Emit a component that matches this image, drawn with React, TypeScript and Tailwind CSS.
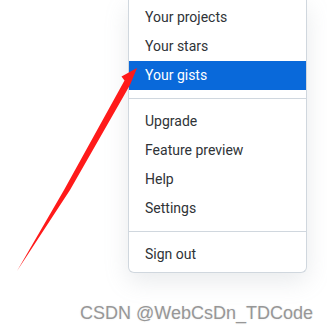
import React from 'react';

const topItems = ['Your projects', 'Your stars', 'Your gists'];
const midItems = ['Upgrade', 'Feature preview', 'Help', 'Settings'];

const Item = ({ label, active }: { label: string; active?: boolean }) => (
    <div
        className={`h-[29px] pl-4 pr-2 flex items-center text-[14px] ${active ? 'bg-[#0969da] text-white' : 'text-[#2f3337]'}`}
    >
        {label}
    </div>
);

const App = () => {
    return (
        <div className="relative w-[327px] h-[332px] overflow-hidden bg-white font-['Roboto',sans-serif]">
            <div className="ml-[128px] w-[179px] border-x border-b border-[#d0d7de] rounded-b-[6px] bg-white pt-[3px] pb-[3px] shadow-[0_8px_24px_rgba(140,149,159,0.2)]">
                {topItems.map(i => (
                    <Item key={i} label={i} active={i === 'Your gists'} />
                ))}
                <div className="h-px bg-[#d0d7de] my-2" />
                {midItems.map(i => (
                    <Item key={i} label={i} />
                ))}
                <div className="h-px bg-[#d0d7de] my-2" />
                <Item label="Sign out" />
            </div>

            <p className="mt-[30px] ml-[80px] text-[18px] leading-5 text-[#979797] font-['Liberation_Sans',sans-serif] [text-shadow:0_0_2px_#e5e5e5]">
                CSDN @WebCsDn_TDCode
            </p>

            {/* annotation arrow */}
            <svg className="absolute left-0 top-0" width="327" height="332" viewBox="0 0 327 332">
                <polygon
                    points="137,68 130,85 70,190 17,271 64,190 124.5,80.5 121.5,76.5"
                    fill="#ff1a1a"
                />
            </svg>
        </div>
    );
};

export default App;
